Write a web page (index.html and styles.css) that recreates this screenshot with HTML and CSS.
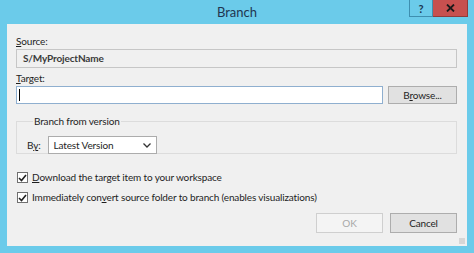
FILE: index.html
```html
<!DOCTYPE html>
<html lang="en">
<head>
<meta charset="UTF-8">
<title>Branch</title>
<link rel="stylesheet" href="styles.css">
</head>
<body>
  <div class="window">
    <div class="title-bar">
      <span></span>
      <span class="title">Branch</span>
      <div class="caption-buttons">
        <span class="cap-btn help">?</span>
        <span class="cap-btn close">
          <svg width="9" height="8" viewBox="0 0 9 8"><path d="M1 0.5 L8 7.5 M8 0.5 L1 7.5" stroke="#1a1a1a" stroke-width="1.8"/></svg>
        </span>
      </div>
    </div>

    <div class="client">
      <label class="field-label"><u>S</u>ource:</label>
      <div class="source-box">S/MyProjectName</div>

      <label class="field-label target-label"><u>T</u>arget:</label>
      <div class="target-row">
        <div class="target-input"><span class="caret"></span></div>
        <button class="btn browse">B<u>r</u>owse...</button>
      </div>

      <fieldset class="group">
        <legend>Branch from version</legend>
        <div class="by-row">
          <span>B<u>y</u>:</span>
          <div class="select">
            <span>Latest Version</span>
            <svg width="8" height="5" viewBox="0 0 8 5"><path d="M0.5 0.5 L4 4 L7.5 0.5" fill="none" stroke="#333" stroke-width="1.3"/></svg>
          </div>
        </div>
      </fieldset>

      <div class="check-row first">
        <span class="checkbox"><svg width="9" height="8" viewBox="0 0 9 8"><path d="M1 4 L3.5 6.5 L8 1" fill="none" stroke="#222" stroke-width="1.6"/></svg></span>
        <span><u>D</u>ownload the target item to your workspace</span>
      </div>
      <div class="check-row">
        <span class="checkbox"><svg width="9" height="8" viewBox="0 0 9 8"><path d="M1 4 L3.5 6.5 L8 1" fill="none" stroke="#222" stroke-width="1.6"/></svg></span>
        <span>Immediately con<u>v</u>ert source folder to branch (enables visualizations)</span>
      </div>

      <div class="actions">
        <button class="btn disabled">OK</button>
        <button class="btn">Cancel</button>
      </div>
      <span class="grip"></span>
    </div>
  </div>
</body>
</html>
```

FILE: styles.css
```css
body {
  margin: 0;
  background: #6bcbea;
  font-family: Lato, "Noto Sans", sans-serif;
  font-size: 10px;
  letter-spacing: -0.15px;
  color: #1e1e1e;
}

.window {
  width: 474px;
  height: 253px;
  display: flex;
  flex-direction: column;
}

.title-bar {
  height: 24px;
  display: grid;
  grid-template-columns: 1fr auto 1fr;
  align-items: start;
}

.title {
  font-size: 13px;
  letter-spacing: 0;
  color: #1f3550;
  line-height: 24px;
}

.caption-buttons {
  justify-self: end;
  display: flex;
  margin-right: 6px;
}

.cap-btn {
  height: 17px;
  display: flex;
  align-items: center;
  justify-content: center;
  box-sizing: border-box;
}

.help {
  width: 24px;
  border: 1px solid #3e8fb0;
  border-top: none;
  font-weight: bold;
  font-size: 11px;
  color: #1a3550;
}

.close {
  width: 35px;
  background: #c7504f;
  border: 1px solid #8f3b3b;
  border-top: none;
  border-left: none;
}

.client {
  position: relative;
  margin: 0 7px 7px 7px;
  flex: 1;
  background: #f0f0f0;
  padding: 10px 10px 0 9px;
  box-sizing: border-box;
}

.field-label {
  display: block;
  line-height: 14px;
  margin-bottom: 1px;
}

.source-box {
  height: 19px;
  box-sizing: border-box;
  border: 1px solid #c6c6c6;
  padding: 0 6px;
  line-height: 17px;
  font-weight: bold;
  color: #3a3a3a;
}

.target-label {
  margin-top: 3px;
  margin-bottom: 1px;
}

.target-row {
  display: flex;
  gap: 5px;
}

.target-input {
  flex: 1;
  height: 18px;
  box-sizing: border-box;
  background: #fff;
  border: 1px solid #8fafcf;
  padding: 2px 2px;
}

.caret {
  display: block;
  width: 1px;
  height: 12px;
  background: #000;
}

.btn {
  font: inherit;
  letter-spacing: inherit;
  color: #1e1e1e;
  background: #e1e1e1;
  border: 1px solid #adadad;
  height: 18px;
  padding: 0;
  line-height: 16px;
}

.browse {
  width: 69px;
}

.group {
  margin: 10px 0 0 0;
  border: 1px solid #dcdcdc;
  padding: 8px 0 6px 10px;
  height: 40px;
  box-sizing: border-box;
}

.group legend {
  padding: 0 1px;
  margin-left: 6px;
  line-height: 14px;
}

.by-row {
  display: flex;
  align-items: center;
  gap: 7px;
}

.select {
  width: 109px;
  height: 18px;
  box-sizing: border-box;
  background: #fff;
  border: 1px solid #acacac;
  display: flex;
  align-items: center;
  justify-content: space-between;
  padding: 0 5px 0 5px;
}

.check-row {
  display: flex;
  align-items: center;
  gap: 4px;
  margin-top: 7px;
  line-height: 13px;
  padding-left: 1px;
}

.check-row.first {
  margin-top: 17px;
}

.checkbox {
  width: 11px;
  height: 11px;
  box-sizing: border-box;
  border: 1px solid #707070;
  background: #fff;
  display: flex;
  align-items: center;
  justify-content: center;
}

.actions {
  display: flex;
  justify-content: flex-end;
  gap: 7px;
  margin-top: 9px;
}

.actions .btn {
  width: 67px;
  height: 20px;
}

.btn.disabled {
  background: #f4f4f4;
  border-color: #cfcfcf;
  color: #a8a8a8;
}

.grip {
  position: absolute;
  right: 2px;
  bottom: 2px;
  width: 6px;
  height: 6px;
  background: radial-gradient(circle, #b8b8b8 0.6px, transparent 0.8px) 0 0 / 2px 2px;
}
```
